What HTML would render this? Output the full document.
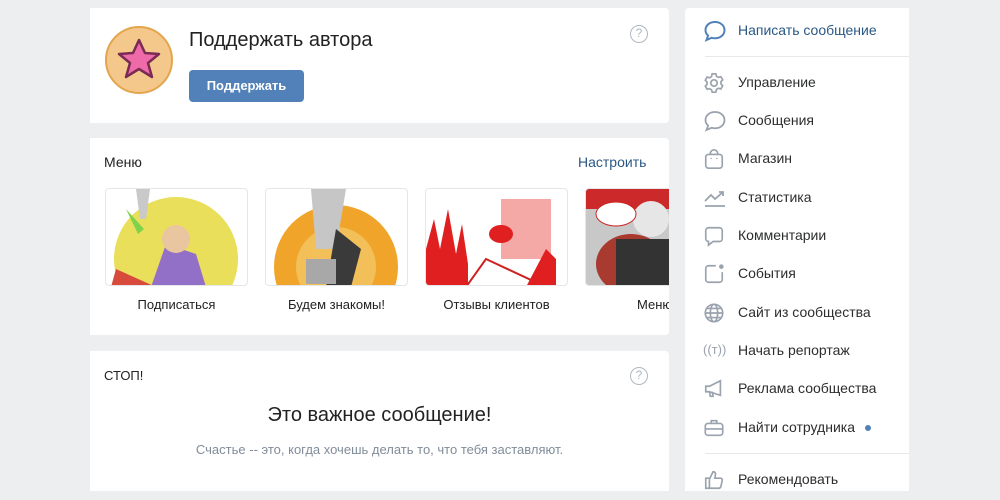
<!DOCTYPE html>
<html><head><meta charset="utf-8"><style>
*{margin:0;padding:0;box-sizing:border-box}
body{width:1000px;height:500px;background:#edeef0;font-family:"Liberation Sans",Arial,sans-serif;position:relative;overflow:hidden;color:#000}
.card{position:absolute;background:#fff;border-radius:4px}
.abs{position:absolute}
.q{position:absolute;width:18px;height:18px;border:1.5px solid #aeb7c2;border-radius:50%;color:#aeb7c2;font-size:12px;text-align:center;line-height:15px}
.mi{position:absolute;left:0;width:224px;height:38px;font-size:14px;color:#2c2d2e}
.mi svg{position:absolute;left:18px;top:9px}
.mi span{position:absolute;left:53px;top:11px}
.th{position:absolute;top:188px;width:143px;height:98px;border:1px solid #e4e6ea;border-radius:4px;overflow:hidden;background:#fff}
.cap{position:absolute;top:297px;font-size:13px;color:#222;text-align:center;width:143px}
</style></head><body>
<div class="card" style="left:90px;top:8px;width:579px;height:115px;border-radius:0 4px 4px 0">
 <svg class="abs" style="left:14px;top:17px" width="70" height="70" viewBox="0 0 70 70"><circle cx="35" cy="35" r="33" fill="#f4c88a" stroke="#e3a54d" stroke-width="2"/><path d="M35 15 L41 28 L55 29 L44 38 L48 52 L35 44 L22 52 L26 38 L15 29 L29 28Z" fill="#ef6aa8" stroke="#7a2b55" stroke-width="2.5" stroke-linejoin="round"/></svg>
 <div class="abs" style="left:99px;top:21px;font-size:20px;color:#222">Поддержать автора</div>
 <div class="abs" style="left:99px;top:62px;width:115px;height:32px;background:#5181b8;border-radius:4px;color:#fff;font-size:13px;font-weight:bold;text-align:center;line-height:32px">Поддержать</div>
 <div class="q" style="left:540px;top:17px">?</div>
</div>
<div class="card" style="left:90px;top:138px;width:579px;height:197px;border-radius:0 4px 4px 0;overflow:hidden">
 <div class="abs" style="left:14px;top:16px;font-size:14px;color:#222">Меню</div>
 <div class="abs" style="left:488px;top:16px;font-size:14px;color:#2a5885">Настроить</div>
</div>
<div style="position:absolute;left:90px;top:138px;width:579px;height:197px;overflow:hidden">
 <div class="th" style="left:15px;top:50px"><svg width="143" height="98"><ellipse cx="70" cy="70" rx="62" ry="62" fill="#eadf5a"/><path d="M20 20l12 25 6-5z" fill="#7ed34b"/><path d="M30 0h14l-4 30h-6z" fill="#c9c9c9"/><path d="M60 55l30 10 10 33H45z" fill="#9370c8"/><circle cx="70" cy="50" r="14" fill="#e9c6a0"/><path d="M10 80l40 18H5z" fill="#d84b3c"/></svg></div>
 <div class="th" style="left:175px;top:50px"><svg width="143" height="98"><circle cx="70" cy="78" r="62" fill="#f0a52a"/><circle cx="70" cy="78" r="40" fill="#f2bf58"/><path d="M45 0h35l-10 60H50z" fill="#c6c6c6"/><path d="M70 40l25 20-10 38H60z" fill="#3a3a3a"/><path d="M40 70h30v25H40z" fill="#a8a8a8"/></svg></div>
 <div class="th" style="left:335px;top:50px"><svg width="143" height="98"><path d="M0 60l8-30 6 30 8-40 8 45 6-30 6 40v25H0z" fill="#e02020"/><path d="M75 10h50v60H75z" fill="#f5a9a7" rx="15"/><ellipse cx="75" cy="45" rx="12" ry="9" fill="#e02020"/><path d="M60 70l60 28H40z" fill="#fff" stroke="#c22" stroke-width="2"/><path d="M120 60l10 10v28h-30z" fill="#e02020"/></svg></div>
 <div class="th" style="left:495px;top:50px"><svg width="143" height="98"><rect width="143" height="98" fill="#c8c8c8"/><path d="M0 0h143v20H0z" fill="#cc2a2a"/><ellipse cx="45" cy="75" rx="35" ry="30" fill="#a83a30"/><path d="M30 50h80v48H30z" fill="#333"/><circle cx="65" cy="30" r="18" fill="#e6e6e6"/><ellipse cx="30" cy="25" rx="20" ry="12" fill="#fff" stroke="#c22"/></svg></div>
 <div class="cap" style="left:15px;top:159px">Подписаться</div>
 <div class="cap" style="left:175px;top:159px">Будем знакомы!</div>
 <div class="cap" style="left:335px;top:159px">Отзывы клиентов</div>
 <div class="cap" style="left:547px;top:159px;text-align:left">Меню</div>
</div>
<div class="card" style="left:90px;top:351px;width:579px;height:140px;border-radius:0 4px 0 0">
 <div class="abs" style="left:14px;top:17px;font-size:13px;color:#222">СТОП!</div>
 <div class="q" style="left:540px;top:16px">?</div>
 <div class="abs" style="left:0;width:579px;top:53px;font-size:20px;color:#222;text-align:center">Это важное сообщение!</div>
 <div class="abs" style="left:0;width:579px;top:91px;font-size:13px;color:#818c99;text-align:center">Счастье -- это, когда хочешь делать то, что тебя заставляют.</div>
</div>
<div class="card" style="left:685px;top:8px;width:224px;height:483px;border-radius:4px 0 0 0">
 <div class="mi" style="top:3px;color:#2a5885"><svg width="24" height="22" viewBox="0 0 24 22" fill="none" stroke="#5181b8" stroke-width="2"><path d="M12 2C6.5 2 2.5 5.5 2.5 10c0 2.3 1 4.2 2.6 5.6L3.5 20l5-2.2c1.1.3 2.3.5 3.5.5 5.5 0 9.5-3.6 9.5-8.2S17.5 2 12 2z"/></svg><span>Написать сообщение</span></div>
 <div class="abs" style="left:20px;top:48px;width:204px;height:1px;background:#e7e8ec"></div>
 <div class="mi" style="top:55px"><svg width="22" height="22" viewBox="0 0 24 24" fill="none" stroke="#99a2ad" stroke-width="1.8"><circle cx="12" cy="12" r="3.5"/><path d="M10 2h4l.7 2.6 2.2 1.3 2.6-.8 2 3.5-1.9 1.9v2.6l1.9 1.9-2 3.5-2.6-.8-2.2 1.3L14 22h-4l-.7-2.6-2.2-1.3-2.6.8-2-3.5 1.9-1.9v-2.6L2.5 9l2-3.5 2.6.8 2.2-1.3z"/></svg><span>Управление</span></div>
 <div class="mi" style="top:93px"><svg width="24" height="22" viewBox="0 0 24 22" fill="none" stroke="#99a2ad" stroke-width="1.8"><path d="M12 2C6.5 2 2.5 5.5 2.5 10c0 2.3 1 4.2 2.6 5.6L3.5 20l5-2.2c1.1.3 2.3.5 3.5.5 5.5 0 9.5-3.6 9.5-8.2S17.5 2 12 2z"/></svg><span>Сообщения</span></div>
 <div class="mi" style="top:131px"><svg width="22" height="22" viewBox="0 0 24 24" fill="none" stroke="#99a2ad" stroke-width="1.8"><rect x="3" y="7" width="18" height="15" rx="3"/><path d="M8 7V6a4 4 0 0 1 8 0v1M9 11v1M15 11v1"/></svg><span>Магазин</span></div>
 <div class="mi" style="top:170px"><svg width="24" height="22" viewBox="0 0 24 22" fill="none" stroke="#99a2ad" stroke-width="1.8"><path d="M2 14l6-6 4 4 8-7M16 5h4v4M2 19h20"/></svg><span>Статистика</span></div>
 <div class="mi" style="top:208px"><svg width="22" height="22" viewBox="0 0 24 24" fill="none" stroke="#99a2ad" stroke-width="1.8"><path d="M6 3h12a3 3 0 0 1 3 3v9a3 3 0 0 1-3 3h-7l-5 4v-4H6a3 3 0 0 1-3-3V6a3 3 0 0 1 3-3z"/></svg><span>Комментарии</span></div>
 <div class="mi" style="top:246px"><svg width="22" height="22" viewBox="0 0 24 24" fill="none" stroke="#99a2ad" stroke-width="1.8"><path d="M14 3H6a3 3 0 0 0-3 3v12a3 3 0 0 0 3 3h12a3 3 0 0 0 3-3v-8"/><circle cx="20" cy="4" r="1.6" fill="#99a2ad"/></svg><span>События</span></div>
 <div class="mi" style="top:285px"><svg width="22" height="22" viewBox="0 0 24 24" fill="none" stroke="#99a2ad" stroke-width="1.8"><circle cx="12" cy="12" r="9.5"/><ellipse cx="12" cy="12" rx="4" ry="9.5"/><path d="M2.5 12h19M4 7h16M4 17h16"/></svg><span>Сайт из сообщества</span></div>
 <div class="mi" style="top:323px"><div class="abs" style="left:18px;top:11px;font-size:13px;color:#99a2ad">((т))</div><span>Начать репортаж</span></div>
 <div class="mi" style="top:361px"><svg width="22" height="22" viewBox="0 0 24 24" fill="none" stroke="#99a2ad" stroke-width="1.8"><path d="M3 9h4l12-6v16L7 15H3zM7 15l1 5h3l-1-5"/></svg><span>Реклама сообщества</span></div>
 <div class="mi" style="top:400px"><svg width="22" height="22" viewBox="0 0 24 24" fill="none" stroke="#99a2ad" stroke-width="1.8"><rect x="2.5" y="7" width="19" height="13" rx="3"/><path d="M9 7V4h6v3M2.5 13h19"/></svg><span>Найти сотрудника</span><div class="abs" style="left:180px;top:17px;width:6px;height:6px;border-radius:50%;background:#5181b8"></div></div>
 <div class="abs" style="left:20px;top:445px;width:204px;height:1px;background:#e7e8ec"></div>
 <div class="mi" style="top:452px"><svg width="22" height="22" viewBox="0 0 24 24" fill="none" stroke="#99a2ad" stroke-width="1.8"><path d="M3 10h4v11H3zM7 11l4-8c2 0 3 1 2.5 3.5L13 10h6a2 2 0 0 1 2 2.5l-1.5 6.5a2.5 2.5 0 0 1-2.5 2H7"/></svg><span>Рекомендовать</span></div>
</div>
</body></html>
